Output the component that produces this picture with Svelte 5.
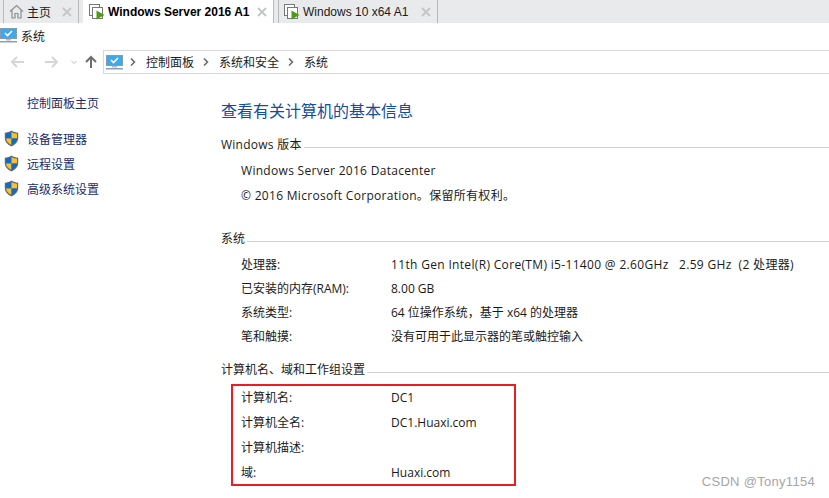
<script>
    const tabs = [
        { id: 'home', label: '主页', width: 76 },
        { id: 'server', label: 'Windows Server 2016 A1', width: 191, active: true },
        { id: 'win10', label: 'Windows 10 x64 A1', width: 160 },
    ]
    const crumbs = ['控制面板', '系统和安全', '系统']
    const tasks = ['设备管理器', '远程设置', '高级系统设置']
    const system = [
        ['处理器:', '11th Gen Intel(R) Core(TM) i5-11400 @ 2.60GHz   2.59 GHz  (2 处理器)'],
        ['已安装的内存(RAM):', '8.00 GB'],
        ['系统类型:', '64 位操作系统，基于 x64 的处理器'],
        ['笔和触摸:', '没有可用于此显示器的笔或触控输入'],
    ]
    const computer = [
        ['计算机名:', 'DC1'],
        ['计算机全名:', 'DC1.Huaxi.com'],
        ['计算机描述:', ''],
        ['域:', 'Huaxi.com'],
    ]
</script>

{#snippet monitor()}
    <svg class="monitor" width="18" height="15" viewBox="0 0 18 15">
        <rect x="0.5" y="0.5" width="16" height="10" fill="#3fa9ea" stroke="#7f9db9" />
        <path d="M5 5l2.500 2.500L12 3" fill="none" stroke="#fff" stroke-width="1.600" />
        <rect x="6" y="11" width="5" height="1.500" fill="#b4bcc6" />
        <rect x="0" y="13" width="17" height="1.500" fill="#8aa0b8" />
    </svg>
{/snippet}

{#snippet vmIcon()}
    <svg width="16" height="16" viewBox="0 0 16 16">
        <rect x="0.500" y="0.500" width="10" height="11" fill="#fff" stroke="#777" />
        <rect x="3.500" y="3.500" width="10" height="11" fill="#fff" stroke="#777" />
        <path d="M7.500 6.500l8 4.500-8 4.500z" fill="#4f9a17" />
    </svg>
{/snippet}

{#snippet shield()}
    <svg width="15" height="17" viewBox="0 0 15 17">
        <path d="M7.500 0.500C5.500 2 3 2.600 0.800 2.700V8c0 4 3 6.800 6.700 8.500C11.200 14.800 14.200 12 14.200 8V2.700C12 2.600 9.500 2 7.500 0.500z" fill="#5d6a75" />
        <path d="M7.500 2v6.500H2V3.800C4 3.600 6 3 7.500 2z" fill="#0d6cc4" />
        <path d="M7.500 2c1.500 1 3.500 1.600 5.500 1.800v4.700H7.500z" fill="#fbc02d" />
        <path d="M2 8.500h5.500v6.300C4.500 13.400 2.300 11.400 2 8.500z" fill="#fbc02d" />
        <path d="M7.500 8.500H13c-.3 2.900-2.500 4.900-5.500 6.300z" fill="#0d6cc4" />
    </svg>
{/snippet}

{#snippet chevron()}
    <svg class="chev" width="6" height="8" viewBox="0 0 6 8">
        <path d="M1 0.500L4.500 4 1 7.500" fill="none" stroke="#666" stroke-width="1.500" />
    </svg>
{/snippet}

{#snippet group(title)}
    <div class="group-title">
        <span>{title}</span>
        <i></i>
    </div>
{/snippet}

<div class="window">
    <div class="tabbar">
        {#each tabs as tab}
            <div class="tab" class:active={tab.active} style="width: {tab.width}px">
                {#if tab.id === 'home'}
                    <svg class="home" width="15" height="15" viewBox="0 0 15 15">
                        <path d="M1 7.500L7.500 1.500 14 7.500M3 6.500V14h3V9.500h3V14h3V6.500" fill="none" stroke="#8a8f94" stroke-width="1.200" />
                    </svg>
                {:else}
                    {@render vmIcon()}
                {/if}
                <span class="tab-label">{tab.label}</span>
                <svg class="close" width="10" height="10" viewBox="0 0 10 10">
                    <path d="M1 1l8 8M9 1L1 9" stroke="#c4c6c8" stroke-width="2" />
                </svg>
            </div>
        {/each}
    </div>

    <div class="title-row">
        {@render monitor()}
        <span>系统</span>
    </div>

    <div class="nav-row">
        <svg class="nav" width="92" height="14" viewBox="0 0 92 14">
            <path d="M18 7H6M11 2L6 7l5 5" fill="none" stroke="#d6d6d6" stroke-width="2" />
            <path d="M39 7h12M46 2l5 5-5 5" fill="none" stroke="#d6d6d6" stroke-width="2" />
            <path d="M65.500 6l2.500 2.500L70.500 6" fill="none" stroke="#d6d6d6" stroke-width="1.200" />
            <path d="M85 13V2M80 7l5-5 5 5" fill="none" stroke="#6e6e6e" stroke-width="2" />
        </svg>
        <div class="address">
            {@render monitor()}
            {#each crumbs as crumb}
                {@render chevron()}
                <span>{crumb}</span>
            {/each}
        </div>
    </div>

    <div class="content">
        <aside class="side">
            <a class="home-link">控制面板主页</a>
            <div class="task-list">
                {#each tasks as task}
                    <div class="task">
                        {@render shield()}
                        <a>{task}</a>
                    </div>
                {/each}
            </div>
        </aside>

        <main class="main">
            <h1>查看有关计算机的基本信息</h1>

            <div class="latin">{@render group('Windows 版本')}</div>
            <div class="edition">
                <div>Windows Server 2016 Datacenter</div>
                <div>© 2016 Microsoft Corporation。保留所有权利。</div>
            </div>

            {@render group('系统')}
            <div class="rows system">
                {#each system as [key, value]}
                    <div class="row"><span class="key">{key}</span><span class="value">{value}</span></div>
                {/each}
            </div>

            {@render group('计算机名、域和工作组设置')}
            <div class="rows computer">
                {#each computer as [key, value]}
                    <div class="row"><span class="key">{key}</span><span class="value">{value}</span></div>
                {/each}
            </div>
        </main>
    </div>

    <div class="watermark">CSDN @Tony1154</div>
</div>

<style>
    :global(body) {
        margin: 0;
        background: #fff;
    }

    .window {
        position: relative;
        width: 829px;
        height: 498px;
        overflow: hidden;
        font-family: "Open Sans", "Noto Sans CJK SC", sans-serif;
        font-size: 12px;
        color: #1a1a1a;
        background: #fff;
    }

    .tabbar {
        display: flex;
        height: 23px;
        background: #e9eaeb;
        padding-left: 3px;
        gap: 4px;
    }

    .tab {
        display: flex;
        align-items: center;
        gap: 3px;
        box-sizing: border-box;
        height: 23px;
        padding: 0 6px 0 5px;
        border-left: 1px solid #b9b9b9;
        border-right: 1px solid #b9b9b9;
        font-family: "Liberation Sans", "Noto Sans CJK SC", sans-serif;
    }

    .tab.active {
        background: #fff;
        border-left-color: #fff;
        font-weight: 700;
        color: #000;
    }

    .tab-label {
        flex: 1;
        white-space: nowrap;
    }

    .title-row {
        display: flex;
        align-items: center;
        gap: 3px;
        height: 25px;
    }

    .nav-row {
        display: flex;
        align-items: center;
        gap: 5px;
        height: 28px;
        padding-left: 6px;
    }

    .address {
        display: flex;
        align-items: center;
        flex: 1;
        height: 22px;
        padding-left: 2px;
        border: 1px solid #d9d9d9;
        border-right: none;
    }

    .address .chev {
        margin: 0 10px 0 9px;
    }

    .address .monitor {
        margin-right: -3px;
    }

    .content {
        display: flex;
    }

    .side {
        box-sizing: border-box;
        width: 221px;
        padding-top: 19px;
        color: #1a2c6b;
    }

    .home-link {
        display: block;
        margin-left: 27px;
        line-height: 17px;
    }

    .task-list {
        display: flex;
        flex-direction: column;
        gap: 8px;
        margin-top: 18px;
    }

    .task {
        display: flex;
        align-items: center;
        gap: 8px;
        height: 17px;
        padding-left: 4px;
    }

    .main {
        flex: 1;
        min-width: 0;
        padding-top: 23px;
    }

    h1 {
        margin: 0 0 13px;
        font-size: 16px;
        font-weight: 400;
        line-height: 24px;
        color: #0f4ea3;
    }

    .group-title {
        display: flex;
        align-items: center;
        gap: 2px;
        height: 16px;
    }

    .latin {
        letter-spacing: 0.25px;
    }

    .group-title i {
        flex: 1;
        height: 1px;
        margin-top: 6px;
        background: #cfcfcf;
    }

    .edition {
        display: flex;
        flex-direction: column;
        gap: 8px;
        height: 78px;
        padding: 10px 0 0 20px;
        box-sizing: border-box;
        line-height: 17px;
        letter-spacing: 0.3px;
    }

    .rows {
        display: flex;
        flex-direction: column;
    }

    .row {
        display: flex;
        align-items: center;
        height: 24px;
    }

    .key {
        flex: 0 0 150px;
    }

    .value {
        white-space: pre;
    }

    .system {
        padding: 6px 0 13px 20px;
    }

    .system .row:first-child .value {
        letter-spacing: 0.33px;
    }

    .computer {
        box-sizing: border-box;
        width: 285px;
        height: 102px;
        margin: 7px 0 0 10px;
        padding: 1px 0 0 8px;
        border: 2px solid #ed1c24;
        gap: 5px;
    }

    .computer .row {
        height: 20px;
    }

    .watermark {
        position: absolute;
        right: 14px;
        bottom: 9px;
        font-family: "Liberation Sans", sans-serif;
        font-size: 13px;
        letter-spacing: 0.3px;
        color: #a6a6a6;
    }
</style>
